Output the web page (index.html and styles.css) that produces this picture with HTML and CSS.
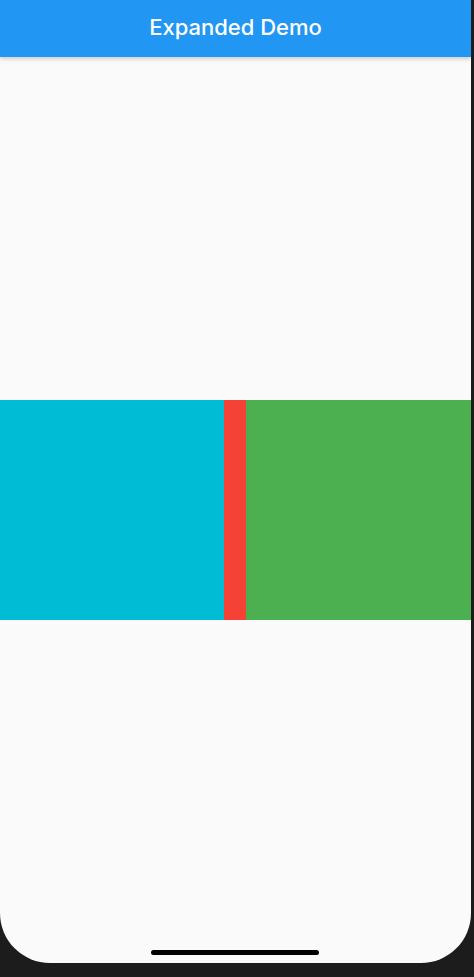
FILE: index.html
```html
<!DOCTYPE html>
<html>
<head>
<meta charset="utf-8">
<link rel="stylesheet" href="styles.css">
</head>
<body>
<div class="screen">
  <header class="appbar"><span class="title">Expanded Demo</span></header>
  <main class="content">
    <div class="row">
      <div class="box cyan"></div>
      <div class="box red"></div>
      <div class="box green"></div>
    </div>
  </main>
  <div class="home-indicator"></div>
</div>
</body>
</html>
```
FILE: styles.css
```css
html, body {
  margin: 0;
  padding: 0;
  background: #1c1c1c;
  width: 474px;
  height: 977px;
  overflow: hidden;
}
.screen {
  position: relative;
  width: 471px;
  height: 963px;
  background: #fafafa;
  border-radius: 0 0 50px 50px;
  overflow: hidden;
  display: flex;
  flex-direction: column;
}
.appbar {
  height: 57px;
  flex: none;
  background: #2196f3;
  display: flex;
  align-items: center;
  justify-content: center;
  box-shadow: 0 2px 4px rgba(0,0,0,0.18);
  position: relative;
  z-index: 1;
}
.title {
  font-family: Inter, "Noto Sans", sans-serif;
  font-size: 22px;
  font-weight: 500;
  color: #ffffff;
  margin-top: -3px;
}
.content {
  flex: 1;
  display: flex;
  flex-direction: column;
  justify-content: center;
}
.row {
  display: flex;
  height: 220px;
}
.box { height: 100%; }
.cyan { width: 224px; background: #00bcd4; }
.red { width: 22px; background: #f44336; }
.green { flex: 1; background: #4caf50; }
.home-indicator {
  position: absolute;
  left: 151px;
  top: 950px;
  width: 168px;
  height: 5px;
  border-radius: 3px;
  background: #000;
}
```
